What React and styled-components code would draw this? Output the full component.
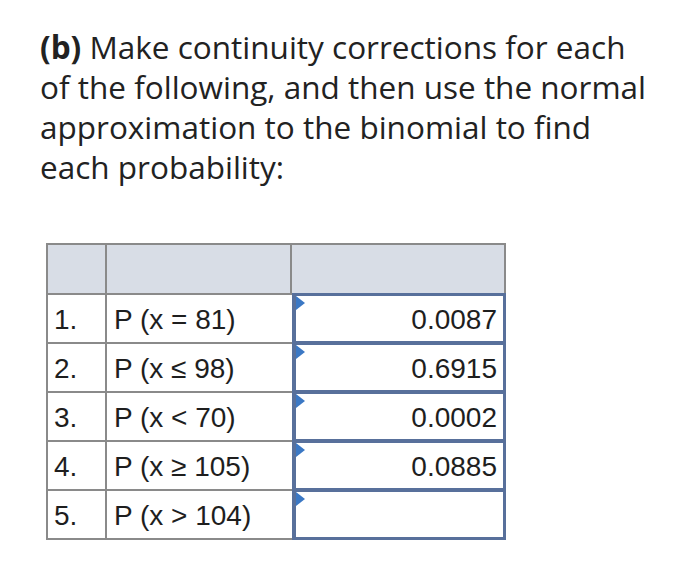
import React from 'react'
import styled, { createGlobalStyle } from 'styled-components'

const Global = createGlobalStyle`
  html, body { margin: 0; padding: 0; background: #ffffff; }
  body { width: 700px; height: 575px; overflow: hidden; }
`

const rows = [
    { n: '1.', label: 'P (x = 81)', value: '0.0087' },
    { n: '2.', label: 'P (x ≤ 98)', value: '0.6915' },
    { n: '3.', label: 'P (x < 70)', value: '0.0002' },
    { n: '4.', label: 'P (x ≥ 105)', value: '0.0885' },
    { n: '5.', label: 'P (x > 104)', value: '' },
]

const Page = styled.div`
  padding: 27px 0 0 40px;
  font-family: "Open Sans", Lato, sans-serif;
  color: #222;
`

const Prompt = styled.p`
  margin: 0;
  white-space: nowrap;
  font-size: 31.5px;
  line-height: 40px;
`

const Table = styled.div`
  display: grid;
  grid-template-columns: 59px 185px 214px;
  grid-auto-rows: 49px;
  grid-template-rows: 50px;
  width: 460px;
  margin: 56px 0 0 6px;
  border-top: 2px solid #8a8a8a;
  border-left: 2px solid #8a8a8a;
  box-sizing: border-box;
  font-family: "Liberation Sans", Arial, sans-serif;
  font-size: 28px;
  color: #1e1e1e;
`

const HeadCell = styled.div`
  background: #d8dde6;
  border-right: 2px solid #8a8a8a;
  border-bottom: 2px solid #8a8a8a;
`

const Cell = styled.div`
  display: flex;
  align-items: center;
  padding-left: ${p => p.$pad}px;
  padding-top: 2px;
  border-right: ${p => (p.$last ? 'none' : '2px solid #8a8a8a')};
  border-bottom: 2px solid #8a8a8a;
`

const Answer = styled.div`
  position: relative;
  display: flex;
  align-items: center;
  justify-content: flex-end;
  padding-right: 6px;
  padding-top: 2px;
  border: 3px solid #58709b;
  border-left-width: 4px;
  background: #fff;
  margin-top: -2px;
  &::before {
    content: '';
    position: absolute;
    left: 0;
    top: 0;
    border-top: 7px solid transparent;
    border-bottom: 7px solid transparent;
    border-left: 9px solid #3b78c4;
  }
`

export default function App() {
    return (
        <Page>
            <Global />
            <Prompt>
                <strong>(b)</strong> Make continuity corrections for each<br />
                of the following, and then use the normal<br />
                approximation to the binomial to find<br />
                each probability:
            </Prompt>
            <Table>
                <HeadCell />
                <HeadCell />
                <HeadCell />
                {rows.map(r => (
                    <React.Fragment key={r.n}>
                        <Cell $pad={6}>{r.n}</Cell>
                        <Cell $pad={7} $last>{r.label}</Cell>
                        <Answer>{r.value}</Answer>
                    </React.Fragment>
                ))}
            </Table>
        </Page>
    )
}
